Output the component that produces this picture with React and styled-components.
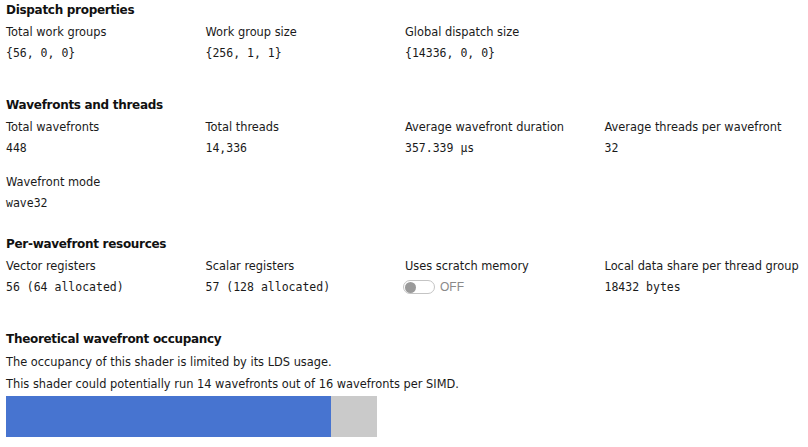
import React from 'react';
import styled, { createGlobalStyle } from 'styled-components';

const GlobalStyle = createGlobalStyle`
  html, body {
    margin: 0;
    padding: 0;
    background: #ffffff;
  }
  body {
    font-family: "DejaVu Sans", Verdana, sans-serif;
    font-size: 11.4px;
    color: #1a1a1a;
  }
`;

const sections = [
  {
    title: 'Dispatch properties',
    gap: 32,
    items: [
      { label: 'Total work groups', value: '{56, 0, 0}' },
      { label: 'Work group size', value: '{256, 1, 1}' },
      { label: 'Global dispatch size', value: '{14336, 0, 0}' },
    ],
  },
  {
    title: 'Wavefronts and threads',
    gap: 21,
    items: [
      { label: 'Total wavefronts', value: '448' },
      { label: 'Total threads', value: '14,336' },
      { label: 'Average wavefront duration', value: '357.339 µs' },
      { label: 'Average threads per wavefront', value: '32' },
      { label: 'Wavefront mode', value: 'wave32' },
    ],
  },
  {
    title: 'Per-wavefront resources',
    gap: 32,
    items: [
      { label: 'Vector registers', value: '56 (64 allocated)' },
      { label: 'Scalar registers', value: '57 (128 allocated)' },
      { label: 'Uses scratch memory', toggle: true },
      { label: 'Local data share per thread group', value: '18432 bytes' },
    ],
  },
];

const App = () => {
  const used = 14;
  const total = 16;

  return (
    <>
      <GlobalStyle />
      <Page>
        {sections.map((s) => (
          <Section key={s.title} $gap={s.gap}>
            <Heading>{s.title}</Heading>
            <Grid>
              {s.items.map((it) => (
                <Item key={it.label}>
                  <Label>{it.label}</Label>
                  {it.toggle ? (
                    <ToggleRow>
                      <Track>
                        <Knob />
                      </Track>
                      <ToggleText>OFF</ToggleText>
                    </ToggleRow>
                  ) : (
                    <Value>{it.value}</Value>
                  )}
                </Item>
              ))}
            </Grid>
          </Section>
        ))}

        <Section $gap={0}>
          <Heading>Theoretical wavefront occupancy</Heading>
          <Text>The occupancy of this shader is limited by its LDS usage.</Text>
          <Text>
            This shader could potentially run {used} wavefronts out of {total} wavefronts per SIMD.
          </Text>
          <Bar>
            <BarFill style={{ width: `${(used / total) * 100}%` }} />
          </Bar>
        </Section>
      </Page>
    </>
  );
};

export default App;

// Styled Components
const Page = styled.div`
  padding: 1px 0 0 6px;
  width: 802px;
`;

const Section = styled.section`
  margin-bottom: ${(p) => p.$gap}px;
`;

const Heading = styled.h2`
  margin: 0 0 3px 0;
  font-size: 12px;
  font-weight: bold;
  letter-spacing: -0.3px;
  line-height: 18px;
  color: #111;
`;

const Grid = styled.div`
  display: grid;
  grid-template-columns: repeat(4, 199.5px);
  row-gap: 13px;
`;

const Item = styled.div`
  display: flex;
  flex-direction: column;
`;

const Label = styled.div`
  line-height: 20px;
  white-space: nowrap;
`;

const Value = styled.div`
  font-family: "DejaVu Sans Mono", "Liberation Mono", monospace;
  font-size: 11.5px;
  line-height: 22px;
  white-space: nowrap;
`;

const ToggleRow = styled.div`
  display: flex;
  align-items: center;
  height: 22px;
  margin-left: -2px;
`;

const Track = styled.div`
  box-sizing: border-box;
  width: 32px;
  height: 14px;
  border: 1px solid #c4c4c4;
  border-radius: 7px;
  display: flex;
  align-items: center;
  padding-left: 1px;
`;

const Knob = styled.div`
  width: 11px;
  height: 11px;
  border-radius: 50%;
  background: #9a9a9a;
`;

const ToggleText = styled.span`
  margin-left: 5px;
  font-family: "Liberation Sans", Arial, sans-serif;
  font-size: 12px;
  color: #8a8a8a;
`;

const Text = styled.p`
  margin: 0;
  line-height: 22px;
`;

const Bar = styled.div`
  margin-top: 1px;
  width: 371px;
  height: 41px;
  background: #cacaca;
  display: flex;
`;

const BarFill = styled.div`
  height: 100%;
  background: #4774d0;
`;
